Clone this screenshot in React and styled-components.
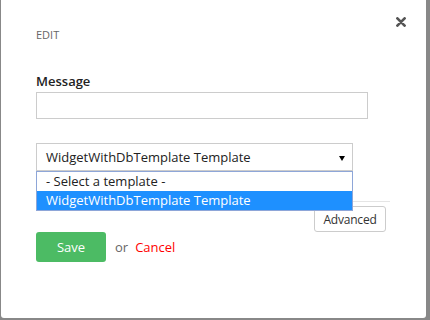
import React from 'react';
import styled, { createGlobalStyle } from 'styled-components';

const GlobalStyle = createGlobalStyle`
  html, body {
    margin: 0;
    padding: 0;
    background: #888888;
  }
  body {
    font-family: "Open Sans", "Liberation Sans", sans-serif;
  }
`;

const Modal = styled.div`
  position: relative;
  box-sizing: border-box;
  width: 425px;
  height: 318px;
  margin-left: 1px;
  background: #fff;
  border-radius: 0 0 3px 3px;
  padding: 27px 0 0 35px;
`;

const CloseButton = styled.button`
  position: absolute;
  top: 16px;
  right: 19px;
  width: 12px;
  height: 12px;
  padding: 0;
  border: 0;
  background: none;
  display: flex;
  align-items: center;
  justify-content: center;
  cursor: pointer;
`;

const Title = styled.div`
  font-size: 11px;
  line-height: 15px;
  color: #666;
  text-transform: uppercase;
`;

const Form = styled.form`
  width: 354px;
  margin-top: 30px;
`;

const Label = styled.label`
  display: block;
  font-size: 13px;
  font-weight: 600;
  line-height: 18px;
  color: #222;
  margin-bottom: 2px;
`;

const TextInput = styled.input`
  display: block;
  box-sizing: border-box;
  width: 332px;
  height: 27px;
  margin: 0;
  border: 1px solid #cccccc;
  outline: none;
`;

const SelectWrap = styled.div`
  position: relative;
  width: 317px;
  margin-top: 24px;
`;

const SelectBox = styled.div`
  box-sizing: border-box;
  height: 28px;
  border: 1px solid #cccccc;
  padding: 0 7px 0 9px;
  display: flex;
  align-items: center;
  justify-content: space-between;
  font-size: 13px;
  color: #222;
`;

const Arrow = styled.span`
  width: 0;
  height: 0;
  margin-top: 3px;
  border-left: 3px solid transparent;
  border-right: 3px solid transparent;
  border-top: 5px solid #000;
`;

const OptionList = styled.div`
  position: absolute;
  top: 100%;
  left: 0;
  right: 0;
  z-index: 2;
  background: #fff;
  border: 1px solid #8ea6d8;
`;

const Option = styled.div`
  height: 19px;
  line-height: 19px;
  padding-left: 9px;
  font-size: 13px;
  color: ${(p) => (p.$active ? '#fff' : '#222')};
  background: ${(p) => (p.$active ? '#1e90ff' : '#fff')};
`;

const Rule = styled.div`
  height: 1px;
  margin-top: 30px;
  background: #e5e5e5;
`;

const AdvancedRow = styled.div`
  display: flex;
  justify-content: flex-end;
  padding-right: 4px;
`;

const AdvancedButton = styled.button`
  box-sizing: border-box;
  width: 72px;
  height: 26px;
  margin-top: 4px;
  padding: 0;
  border: 1px solid #cccccc;
  border-radius: 3px;
  background: #fff;
  font-family: inherit;
  font-size: 12px;
  letter-spacing: -0.2px;
  color: #333;
`;

const Actions = styled.div`
  display: flex;
  align-items: center;
  font-size: 13px;
`;

const SaveButton = styled.button`
  width: 70px;
  height: 30px;
  border: 0;
  border-radius: 3px;
  background: #4cbb64;
  color: #fff;
  font-family: inherit;
  font-size: 13px;
`;

const Or = styled.span`
  margin-left: 9px;
  color: #666;
`;

const CancelLink = styled.a`
  margin-left: 7px;
  color: #ff0000;
  text-decoration: none;
`;

export default function App() {
  return (
    <>
      <GlobalStyle />
      <Modal>
        <CloseButton type="button" aria-label="Close">
          <svg width="10" height="10" viewBox="0 0 10 10">
            <path d="M1.4 1.4 L8.6 8.6 M8.6 1.4 L1.4 8.6" stroke="#555" strokeWidth="2.7" strokeLinecap="round" />
          </svg>
        </CloseButton>
        <Title>Edit</Title>
        <Form>
          <Label>Message</Label>
          <TextInput type="text" />
          <SelectWrap>
            <SelectBox>
              <span>WidgetWithDbTemplate Template</span>
              <Arrow />
            </SelectBox>
            <OptionList>
              <Option>- Select a template -</Option>
              <Option $active>WidgetWithDbTemplate Template</Option>
            </OptionList>
          </SelectWrap>
          <Rule />
          <AdvancedRow>
            <AdvancedButton type="button">Advanced</AdvancedButton>
          </AdvancedRow>
          <Actions>
            <SaveButton type="button">Save</SaveButton>
            <Or>or</Or>
            <CancelLink href="#">Cancel</CancelLink>
          </Actions>
        </Form>
      </Modal>
    </>
  );
}
